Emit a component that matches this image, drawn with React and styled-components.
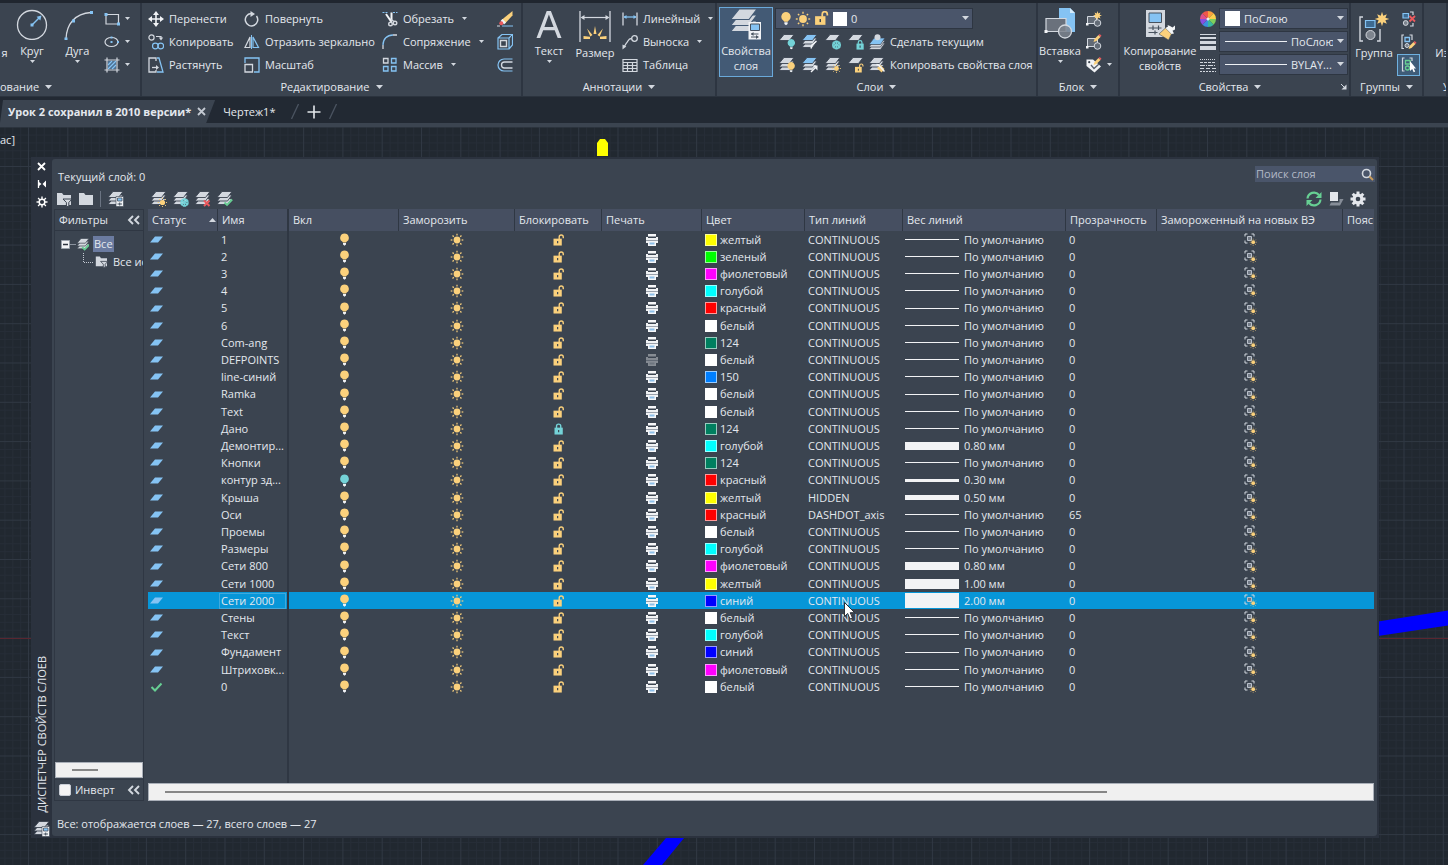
import React, { useState } from 'react';
import styled, { createGlobalStyle } from 'styled-components';

const GlobalStyle = createGlobalStyle`
  * {
    box-sizing: border-box;
  }
  body {
    margin: 0;
    background: #212830;
    color: #e4e8ee;
    font-family: 'Open Sans', 'Noto Sans', sans-serif;
    font-size: 11px;
    line-height: 16px;
  }
  button, input, select {
    font: inherit;
    color: inherit;
  }
  button {
    padding: 0;
    border: none;
    background: none;
    cursor: default;
  }
  svg {
    display: block;
    flex: none;
  }
`;

const GREY = '#d3d8df';
const BLUE = '#85c3f3';
const YELLOW = '#fbd17c';
const TEAL = '#74d3d8';
const GREEN = '#67cf93';
const RED = '#ec5a5e';

const Page = styled.div`
  display: flex;
  flex-direction: column;
  min-height: 100vh;
  overflow: hidden;
`;

/* ---------- ribbon ---------- */

const Ribbon = styled.header`
  display: flex;
  border-top: 3px solid #20262f;
  border-bottom: 1px solid #2b333e;
  background: #3b4450;
  white-space: nowrap;
  overflow: hidden;
`;

const RibbonPanel = styled.section`
  display: flex;
  flex-direction: column;
  flex: ${(p) => (p.$width ? 'none' : 1)};
  width: ${(p) => (p.$width ? `${p.$width}px` : 'auto')};
  min-width: 0;
  height: 93px;
  overflow: hidden;
  border-right: 2px solid #2d3541;
`;

const PanelBody = styled.div`
  display: flex;
  flex: 1;
  padding: 4px 0 0 ${(p) => p.$left || 0}px;
`;

const PanelTitle = styled.button`
  display: flex;
  align-items: center;
  justify-content: ${(p) => p.$align || 'center'};
  gap: 6px;
  height: 19px;
  padding-left: ${(p) => p.$left || 0}px;
`;

const TitleBarRow = styled.div`
  display: flex;
  align-items: center;

  & > :first-child {
    flex: 1;
  }
`;

const Column = styled.div`
  display: flex;
  flex-direction: column;
  width: ${(p) => (p.$width ? `${p.$width}px` : 'auto')};
`;

const Tool = styled.button`
  display: flex;
  align-items: center;
  gap: 5px;
  height: 23px;
  padding-left: ${(p) => p.$left || 0}px;
`;

const CaretSlot = styled.span`
  margin-left: 3px;
`;

const IconRow = styled.div`
  display: flex;
  align-items: center;
  height: 23px;
`;

const SmallTool = styled.button`
  display: flex;
  align-items: center;
  justify-content: center;
  width: 23px;
  height: 22px;
  border: 1px solid ${(p) => (p.$active ? '#6fb1e0' : 'transparent')};
  background: ${(p) => (p.$active ? '#3f5c78' : 'none')};
`;

const BigTool = styled.button`
  display: flex;
  flex-direction: column;
  align-items: center;
  flex: none;
  width: ${(p) => p.$width}px;
  height: 70px;
  border: 1px solid ${(p) => (p.$active ? '#6aa9da' : 'transparent')};
  background: ${(p) => (p.$active ? '#435a75' : 'none')};
  line-height: 15px;

  & > svg:first-child {
    margin-bottom: 3px;
  }
  & > svg:last-child {
    margin-top: 2px;
  }
`;

const Combo = styled.div`
  position: relative;
  display: flex;
  align-items: center;
  gap: 4px;
  width: ${(p) => p.$width}px;
  height: 21px;
  margin: 1px 0;
  padding-left: 5px;
  border: 1px solid #2e3642;
  background: #4a556a;
`;

const ComboSelect = styled.select`
  flex: 1;
  min-width: 0;
  height: 19px;
  padding: 0 14px 0 0;
  border: none;
  background: transparent;
  appearance: none;
  outline: none;
`;

const ComboCaret = styled.span`
  position: absolute;
  right: 3px;
  top: 7px;
  pointer-events: none;
`;

const Swatch = styled.span`
  flex: none;
  width: ${(p) => p.$size || 12}px;
  height: ${(p) => p.$size || 12}px;
  border: 1px solid rgba(255, 255, 255, 0.6);
  background: ${(p) => p.$color};
`;

const LineSample = styled.span`
  flex: none;
  width: 62px;
  height: 1px;
  background: #eef1f5;
`;

/* ---------- file tabs ---------- */

const TabStrip = styled.nav`
  display: flex;
  align-items: flex-end;
  height: 30px;
  border-bottom: 4px solid #3b4450;
  background: #222933;
`;

const FileTab = styled.div`
  display: flex;
  align-items: center;
  gap: 6px;
  height: 23px;
  padding: 0 ${(p) => (p.$active ? 9 : 16)}px 0 8px;
  background: ${(p) => (p.$active ? '#3b4450' : 'none')};
  clip-path: ${(p) => (p.$active ? 'polygon(3px 0, 100% 0, calc(100% - 9px) 100%, 0 100%)' : 'none')};
  font-weight: ${(p) => (p.$active ? 700 : 400)};
`;

const NewTab = styled.div`
  display: flex;
  align-items: center;
  gap: 8px;
  height: 23px;
`;

/* ---------- drawing area ---------- */

const Canvas = styled.main`
  position: relative;
  display: flex;
  flex: 1;
  padding: 30px 69px 27px 31px;
`;

const Drawing = styled.svg`
  position: absolute;
  inset: 0;
  width: 100%;
  height: 100%;
`;

const ViewLabel = styled.span`
  position: absolute;
  left: 0;
  top: 5px;
`;

/* ---------- layer palette ---------- */

const Palette = styled.section`
  position: relative;
  display: flex;
  flex: 1;
  min-width: 0;
  background: #2b323e;
`;

const PaletteSide = styled.div`
  display: flex;
  flex-direction: column;
  align-items: center;
  width: 21px;
`;

const SideButton = styled.button`
  display: flex;
  align-items: center;
  justify-content: center;
  width: 18px;
  height: 18px;
`;

const SideTitle = styled.h1`
  margin: auto 0 7px;
  font-size: 11px;
  font-weight: 400;
  line-height: 16px;
  writing-mode: vertical-rl;
  transform: rotate(180deg);
`;

const PalettePanel = styled.div`
  display: flex;
  flex-direction: column;
  flex: 1;
  min-width: 0;
  margin: 2px 2px 2px 0;
  border-radius: 3px;
  background: #3b4450;
`;

const HeadRow = styled.div`
  display: flex;
  align-items: flex-start;
  justify-content: space-between;
  height: 30px;
  padding: 7px 2px 0 6px;
`;

const CurrentLayer = styled.div`
  padding-top: 3px;
`;

const SearchBox = styled.label`
  display: flex;
  align-items: center;
  width: 120px;
  height: 16px;
  padding-right: 1px;
  background: #4a556a;
`;

const SearchInput = styled.input`
  flex: 1;
  min-width: 0;
  height: 16px;
  padding: 0 1px;
  border: none;
  background: transparent;
  outline: none;

  &::placeholder {
    color: #b3bac6;
    opacity: 1;
  }
`;

const Toolbar = styled.div`
  display: flex;
  align-items: center;
  height: 20px;
  padding: 0 8px 0 1px;
`;

const ToolbarButton = styled.button`
  display: flex;
  align-items: center;
  justify-content: center;
  width: 22px;
  height: 18px;
`;

const Divider = styled.span`
  width: 1px;
  height: 16px;
  margin: 0 4px 0 3px;
  background: #6b7482;
`;

const ToolbarGap = styled.span`
  width: 21px;
  flex: ${(p) => (p.$grow ? 1 : 'none')};
`;

const Workspace = styled.div`
  display: flex;
  flex: 1;
  gap: 4px;
  padding: 0 3px 0 2px;
`;

const Filters = styled.aside`
  display: flex;
  flex-direction: column;
  flex: none;
  width: 90px;
  border: 1px solid #2f3743;
`;

const FilterHead = styled.div`
  display: flex;
  align-items: center;
  justify-content: space-between;
  height: 21px;
  padding: 0 3px 0 4px;
  border-bottom: 1px solid #2f3743;
`;

const FilterFoot = styled(FilterHead)`
  border-top: 1px solid #343c49;
  border-bottom: none;
`;

const Tree = styled.ul`
  flex: 1;
  margin: 0;
  padding: 4px 0 0;
  overflow: hidden;
  list-style: none;
`;

const TreeItem = styled.li`
  display: flex;
  align-items: center;
  gap: 4px;
  height: 18px;
  padding-left: ${(p) => p.$indent}px;
  white-space: nowrap;
  overflow: hidden;
`;

const TreeLabel = styled.span`
  padding: 0 1px;
  background: ${(p) => (p.$selected ? '#6b7ba0' : 'none')};
`;

const ScrollTrack = styled.div`
  display: flex;
  align-items: center;
  height: ${(p) => p.$height}px;
  margin: ${(p) => p.$margin || '0'};
  padding-left: 16px;
  border: 1px solid #a9afb8;
  background: #f0f0f0;
`;

const ScrollThumb = styled.span`
  width: ${(p) => p.$width};
  height: 2px;
  background: #868686;
`;

const Invert = styled.label`
  display: flex;
  align-items: center;
  gap: 4px;
`;

const InvertBox = styled.input`
  width: 12px;
  height: 12px;
  margin: 0;
  border: 1px solid #c9ced6;
  border-radius: 2px;
  background: #f4f4f4;
  appearance: none;
`;

const GridArea = styled.div`
  display: flex;
  flex-direction: column;
  flex: 1;
  min-width: 0;
`;

const TableWrap = styled.div`
  display: flex;
  flex: 1;
`;

const LayerTable = styled.table`
  width: 100%;
  border-spacing: 0;
  table-layout: fixed;
  white-space: nowrap;
`;

const HeadCell = styled.th`
  height: 22px;
  padding: 0 0 0 4px;
  overflow: hidden;
  border-right: ${(p) => (p.$pinned ? 2 : 1)}px solid #2f3743;
  background: #464f61;
  font-weight: 400;
  text-align: left;

  &:last-child {
    border-right: none;
  }
`;

const SortLabel = styled.span`
  display: flex;
  align-items: center;
  justify-content: space-between;
  padding-right: 1px;
`;

const LayerRow = styled.tr`
  height: 17px;
  background: ${(p) => (p.$selected ? '#0796d8' : 'none')};

  &:nth-child(5n) {
    height: 18px;
  }
`;

const Cell = styled.td`
  position: relative;
  padding: 0 0 0 ${(p) => p.$left || 0}px;
  border-right: ${(p) => (p.$pinned ? '2px solid #2f3743' : 'none')};
  line-height: 16px;
`;

const CellContent = styled.div`
  display: flex;
  align-items: center;
  gap: ${(p) => p.$gap || 3}px;
  height: 17px;
`;

const NameBox = styled.div`
  height: 16px;
  margin: 0 1px 0 0;
  padding-left: 2px;
  box-shadow: ${(p) => (p.$selected ? 'inset 0 0 0 1px #3fa9dd' : 'none')};
  line-height: 16px;
`;

const Toggle = styled.button`
  display: flex;
  align-items: center;
  justify-content: center;
  width: 100%;
  height: 16px;
`;

const Weight = styled.span`
  flex: none;
  width: 54px;
  height: ${(p) => p.$thick}px;
  background: #f2f3f5;
`;

const Pointer = styled.svg`
  position: absolute;
  left: 39px;
  top: 10px;
  z-index: 1;
  pointer-events: none;
`;

const Status = styled.footer`
  padding: 15px 5px 4px;
`;

/* ---------- icon parts ---------- */

const Icon = ({ w = 16, h = w, size = w, children, ...rest }) => (
  <svg width={size} height={Math.round((size * h) / w)} viewBox={`0 0 ${w} ${h}`} fill="none" aria-hidden="true" {...rest}>
    {children}
  </svg>
);

const Caret = ({ big, up }) => (
  <Icon w={big ? 7 : 5} h={big ? 4 : 3}>
    <path
      d={up ? 'M0 4L3.500 0 7 4z' : big ? 'M0 0h7L3.500 4z' : 'M0 0h5L2.500 3z'}
      fill={GREY}
    />
  </Icon>
);

const SunShape = ({ x = 6, y = 6, r = 3.4, color = YELLOW }) => (
  <g transform={`translate(${x} ${y}) scale(${r / 3.4})`}>
    <circle r="3.400" fill={color} />
    {[0, 45, 90, 135, 180, 225, 270, 315].map((a) => (
      <path key={a} d="M4.600 0h1.700" transform={`rotate(${a})`} stroke={color} strokeWidth="1.200" />
    ))}
  </g>
);

const BulbShape = ({ x = 0, y = 0, k = 1, color = YELLOW }) => (
  <g transform={`translate(${x} ${y}) scale(${k})`}>
    <path d="M4.500 0a4.400 4.400 0 0 1 2.300 8.100L6 9H3L2.200 8.100A4.400 4.400 0 0 1 4.500 0z" fill={color} />
    <path d="M3 9.600h3v1.500L4.500 12.200 3 11.100z" fill="#f2f4f7" />
  </g>
);

const LockShape = ({ x = 0, y = 0, k = 1, color = YELLOW, closed }) => (
  <g transform={`translate(${x} ${y}) scale(${k})`}>
    <path d="M0 4.500h9V12H0z" fill={color} />
    <path
      d={closed ? 'M2.200 5V3a2.300 2.300 0 0 1 4.600 0v2' : 'M6.200 5V2.800a2.200 2.200 0 0 1 4.400 0V4'}
      stroke={color}
      strokeWidth="1.500"
    />
    <path d="M4.500 7v2.600" stroke="#3b4450" strokeWidth="1.300" />
  </g>
);

const SnowShape = ({ x, y, r = 3.5 }) => (
  <g transform={`translate(${x} ${y}) scale(${r / 3.5})`} stroke={TEAL} strokeWidth="1.300">
    {[30, 90, 150].map((a) => (
      <path key={a} d="M-4 0h8M-3.500 -1.600L-2 0l-1.500 1.600M3.500 -1.600L2 0l1.500 1.600" transform={`rotate(${a})`} />
    ))}
  </g>
);

const StackShape = ({ top = GREY, color = GREY, sheets = 3 }) => (
  <g stroke="#3b4450" strokeWidth="0.900">
    {sheets > 2 && <path d="M5 7.500h10l-4.500 6H0z" fill={color} />}
    {sheets > 1 && <path d="M5 4h10l-4.500 6H0z" fill={color} />}
    <path d="M5 0.500h10l-4.500 6H0z" fill={top} />
  </g>
);

const PencilShape = ({ x = 0, y = 0 }) => (
  <g transform={`translate(${x} ${y})`}>
    <path d="M0 8l1-3L5 1l2 2-4 4z" fill={YELLOW} />
    <path d="M5 1l1.300-1L8 1.700 7 3z" fill={RED} />
  </g>
);

const StarShape = ({ x, y, k = 1 }) => (
  <path
    transform={`translate(${x} ${y}) scale(${k})`}
    d="M0-7L1.200-3.200 4.600-4.600 3.200-1.200 7 0 3.200 1.200 4.600 4.600 1.200 3.200 0 7-1.200 3.200-4.600 4.600-3.200 1.200-7 0-3.200-1.200-4.600-4.600-1.200-3.200z"
    fill={YELLOW}
  />
);

/* ---------- ribbon icons ---------- */

const icons = {
  circle: (
    <Icon w={32}>
      <circle cx="16" cy="17" r="14.500" stroke={GREY} strokeWidth="1.300" />
      <path d="M16 17l7-7" stroke={BLUE} strokeWidth="1.400" />
      <path d="M25.500 7.500l-1.200 5-3.700-3.700z" fill={BLUE} />
      <path d="M14.500 15.500h3v3h-3z" fill={BLUE} />
    </Icon>
  ),
  arc: (
    <Icon w={32}>
      <path d="M4 31C4.500 16 13 5.500 29 4.500" stroke={GREY} strokeWidth="1.300" />
      <path d="M2.500 29.500h3v3h-3zM10 11.500h3v3h-3zM28 3h3v3h-3z" fill={BLUE} />
    </Icon>
  ),
  rect: (
    <Icon>
      <path d="M2 3.500h12.500v9.500H2z" stroke={GREY} strokeWidth="1.200" />
      <path d="M0.500 2h3v3h-3zM13 11.500h3v3h-3z" fill={BLUE} />
    </Icon>
  ),
  ellipse: (
    <Icon>
      <ellipse cx="7.500" cy="8" rx="6.500" ry="4.500" stroke={GREY} strokeWidth="1.200" />
      <path d="M6.500 7h2v2h-2zM6.500 2.500h2v2h-2zM13 7h2v2h-2z" fill={BLUE} />
    </Icon>
  ),
  hatch: (
    <Icon>
      <path d="M3 0.500v15M13 0.500v15M0.500 3h15M0.500 13h15" stroke={GREY} strokeWidth="1.200" />
      <path d="M4 4h8v8H4z" fill="#4d7193" />
      <path d="M4 8l4-4M4 12l8-8M8 12l4-4" stroke={BLUE} strokeWidth="1.200" />
    </Icon>
  ),
  move: (
    <Icon>
      <path d="M8 2v12M2 8h12" stroke="#f2f4f7" strokeWidth="1.600" />
      <path d="M8 0l3 4H5zM8 16l3-4H5zM0 8l4-3v6zM16 8l-4-3v6z" fill="#f2f4f7" />
    </Icon>
  ),
  rotate: (
    <Icon>
      <path d="M7 2.500A6.200 6.200 0 1 0 12.500 5" stroke={GREY} strokeWidth="1.500" />
      <path d="M6.500 0l4.500 3-4.500 3z" fill={GREY} />
    </Icon>
  ),
  copy: (
    <Icon>
      <circle cx="3.500" cy="3.500" r="2.600" stroke={GREY} strokeWidth="1.200" />
      <circle cx="7.300" cy="12" r="2.800" stroke={BLUE} strokeWidth="1.200" />
      <circle cx="12.800" cy="12" r="2.800" stroke={BLUE} strokeWidth="1.200" />
      <path d="M8 2.500h5V4" stroke={GREY} strokeWidth="1.200" />
      <path d="M10.800 3.500h4.400L13 6.500z" fill={GREY} />
    </Icon>
  ),
  mirror: (
    <Icon>
      <path d="M6 3v10.500H1z" stroke={GREY} strokeWidth="1.200" />
      <path d="M9 3v10.500h5.500z" stroke={BLUE} strokeWidth="1.200" />
      <path d="M7.500 1v14" stroke={BLUE} strokeWidth="1" />
    </Icon>
  ),
  stretch: (
    <Icon>
      <path d="M8 4V1H1v14h7v-2" stroke={GREY} strokeWidth="1.300" />
      <path d="M9 1h2l4 14H9" stroke={BLUE} strokeWidth="1.300" />
      <path d="M4 10.500h5" stroke={GREY} strokeWidth="1.300" />
      <path d="M8 8l3 2.500L8 13z" fill={GREY} />
    </Icon>
  ),
  scale: (
    <Icon>
      <path d="M1 6V1h14v14h-5" stroke={BLUE} strokeWidth="1.300" />
      <path d="M1 7.500h7.500V15H1z" stroke={GREY} strokeWidth="1.300" />
    </Icon>
  ),
  trim: (
    <Icon>
      <path d="M0.500 1.500h5M11 1.500h4.500" stroke={BLUE} strokeDasharray="2 1" />
      <path d="M4 3l5.500 8M9.500 1.500V10" stroke="#f2f4f7" strokeWidth="2" />
      <circle cx="8.500" cy="13" r="1.800" stroke={GREY} strokeWidth="1.400" />
      <circle cx="13" cy="12" r="1.800" stroke={GREY} strokeWidth="1.400" />
      <path d="M9 8.500l3 2" stroke={GREY} strokeWidth="1.500" />
    </Icon>
  ),
  fillet: (
    <Icon>
      <path d="M1 15v-4M11 1h4" stroke={GREY} strokeWidth="1.300" />
      <path d="M1 11C1 5 5 1 11 1" stroke={BLUE} strokeWidth="1.300" />
    </Icon>
  ),
  array: (
    <Icon>
      <path d="M1.500 1.500h4.500v4.500H1.500z" stroke={GREY} strokeWidth="1.300" />
      <path d="M9.500 1.500H14v4.500H9.500zM1.500 9.500h4.500V14H1.500zM9.500 9.500H14V14H9.500z" stroke={BLUE} strokeWidth="1.300" />
    </Icon>
  ),
  erase: (
    <Icon>
      <path d="M15.500 0v4.500L8 12.500 4.500 9z" fill={YELLOW} />
      <path d="M5.500 8L9 11.500l-2 2L3.500 10z" fill="#f2f4f7" />
      <circle cx="4.300" cy="12.300" r="2" fill={RED} />
      <path d="M0 15h3" stroke={GREY} />
      <path d="M5 15h11" stroke={BLUE} />
    </Icon>
  ),
  explode: (
    <Icon>
      <path d="M3.500 6.500h6v6h-6z" stroke={GREY} strokeWidth="1.400" />
      <path d="M1 4h11v11H1zM1 4l4-3.500h10.500L12 4M15.500 0.500V11L12 15" stroke={BLUE} strokeWidth="1.200" />
    </Icon>
  ),
  offset: (
    <Icon>
      <path d="M15.500 2H7a6 6 0 0 0 0 12h8.500" stroke={BLUE} strokeWidth="1.200" />
      <path d="M15.500 5H7.500a3 3 0 0 0 0 6h8" stroke={GREY} strokeWidth="1.300" />
    </Icon>
  ),
  text: (
    <Icon w={32}>
      <path d="M3.500 30L13.700 3h4.200L28.500 30h-3.800l-3-7.800H10.200L7.200 30zM11.400 19h9.200L15.900 6.500z" fill={GREY} />
    </Icon>
  ),
  dimension: (
    <Icon w={32}>
      <path d="M1 1v31M31 1v31" stroke={GREY} strokeWidth="1.300" />
      <path d="M3 7.500h26" stroke={GREY} strokeWidth="1.200" />
      <path d="M1.500 7.500l4-2.500v5zM30.500 7.500l-4-2.500v5z" fill={GREY} />
      <path d="M16 16l1.500 8h-3zM8 18.500l5.500 6.500-2.200 1.500zM24 18.500L18.500 25l2.200 1.500zM4.500 26l6.500 0.800V29H4.500zM27.500 26l-6.500 0.800V29h6.500z" fill={YELLOW} />
    </Icon>
  ),
  linear: (
    <Icon>
      <path d="M1 1.500v13M15 1.500v13" stroke={GREY} strokeWidth="1.300" />
      <path d="M2 6h12" stroke={BLUE} strokeWidth="1.300" />
      <path d="M1.500 6l3-2v4zM14.500 6l-3-2v4z" fill={BLUE} />
    </Icon>
  ),
  leader: (
    <Icon>
      <circle cx="12.500" cy="4.500" r="2.800" stroke={GREY} strokeWidth="1.300" />
      <path d="M9.500 4.500C6 4.500 6 8 4.500 9L2 13" stroke={GREY} strokeWidth="1.300" />
      <path d="M0.500 15.500v-5l3.800 2z" fill={GREY} />
    </Icon>
  ),
  table: (
    <Icon>
      <path d="M1 2.500h14v12H1zM1 5.500h14M1 8.500h14M1 11.500h14M5.500 5.500v9M10.500 5.500v9" stroke={GREY} strokeWidth="1.200" />
    </Icon>
  ),
  layerProps: (
    <Icon w={32}>
      <g fill={GREY} stroke="#435a75" strokeWidth="1.200">
        <path d="M9 13h18l-8 10.500H0.500z" />
        <path d="M9 7h18l-8 10.500H0.500z" />
        <path d="M9 1h18l-8 10.500H0.500z" />
      </g>
      <path d="M18.500 14h12.500v17.500H18.500z" fill="#f0f2f5" />
      <path d="M20.500 16h9v6.500h-9z" fill={BLUE} stroke="#47525f" />
      <path d="M21 26h7.500M21 29h7.500" stroke="#47525f" strokeWidth="1.200" />
      <path d="M23.500 24v4L21 26zM26 27v4l2.500-2z" fill="#47525f" />
    </Icon>
  ),
  insert: (
    <Icon w={32}>
      <path d="M15 0h11l5 5v19H15z" fill={BLUE} />
      <path d="M26 0l5 5h-5z" fill="#d6ecfb" />
      <path d="M2 10.500h20v13H2z" fill="#6a717c" stroke={GREY} strokeWidth="1.200" />
      <circle cx="21" cy="23.500" r="6.500" fill="#7d848e" fillOpacity="0.850" stroke={GREY} strokeWidth="1.300" />
      <path d="M0.500 22h3v3h-3z" fill="#f2f4f7" />
    </Icon>
  ),
  blockCreate: (
    <Icon>
      <path d="M1.500 5.500h9v7h-9z" stroke={GREY} fill="#636b76" />
      <circle cx="11.500" cy="12" r="3.300" stroke={GREY} fill="#636b76" />
      <path d="M0 12h2.500v2.500H0z" fill="#f2f4f7" />
      <StarShape x={11.5} y={4.5} k={0.65} />
    </Icon>
  ),
  blockEdit: (
    <Icon>
      <path d="M1.500 4.500h10v8h-10z" stroke={GREY} fill="#636b76" />
      <circle cx="11.500" cy="12" r="3.300" stroke={GREY} fill="#636b76" />
      <path d="M0 12h2.500v2.500H0z" fill="#f2f4f7" />
      <PencilShape x={7.5} y={0} />
    </Icon>
  ),
  blockAttr: (
    <Icon>
      <path d="M0.500 2.500h6.500l8 7-6.500 6L0.500 9z" fill="#f0f2f5" />
      <circle cx="3.200" cy="5.200" r="1.100" fill="#3b4450" />
      <path d="M5 8l3 3.500 5-4.500" stroke="#59616d" strokeWidth="1.300" />
      <PencilShape x={7.5} y={0} />
    </Icon>
  ),
  matchProps: (
    <Icon w={32}>
      <path d="M2 2h19v27H2z" fill={GREY} />
      <path d="M5 5h12.500v9.500H5z" fill={BLUE} stroke="#47525f" />
      <path d="M4.500 20h13M4.500 24.500h9M9 17.500v4.500M14.500 17.500v4.500M11 22.500v4" stroke="#47525f" strokeWidth="1.200" />
      <path d="M15 26l6.500-6 6 6-3 6z" fill={YELLOW} stroke="#47525f" strokeWidth="0.600" />
      <path d="M21.500 20l2.500-1.500-0.500-1.500 2.500 1 2.500 1.500L31 17.500v4l-2.500 1.200 1.500 2.800-2.500 0.500z" fill="#f4f6f8" />
    </Icon>
  ),
  wheel: (
    <Icon>
      {['#f9a03c', '#fbd04c', '#7fcf5d', '#3ab8a0', '#3c8fe0', '#8a4fe0', '#e0508a', '#f0564a'].map((color, i) => (
        <path key={color} d="M8 8V0a8 8 0 0 1 5.657 2.343z" fill={color} transform={`rotate(${i * 45} 8 8)`} />
      ))}
      <circle cx="8" cy="8" r="1.500" fill="#e8ebef" />
    </Icon>
  ),
  lineweight: (
    <Icon>
      <path d="M0 0.500h16" stroke={GREY} />
      <path d="M0 4h16" stroke={GREY} strokeWidth="2" />
      <path d="M0 8.500h16" stroke={GREY} strokeWidth="3" />
      <path d="M0 14h16" stroke={GREY} strokeWidth="4" />
    </Icon>
  ),
  linetype: (
    <Icon>
      <path d="M0 2.500h16" stroke={GREY} strokeDasharray="1 1" />
      <path d="M0 5.500h16" stroke={GREY} strokeDasharray="3 1" />
      <path d="M0 8.500h16" stroke={GREY} strokeDasharray="5 1 1 1" />
      <path d="M0 11.500h16" stroke={GREY} strokeDasharray="4 2" />
      <path d="M0 14.500h16" stroke={GREY} strokeDasharray="2 1" />
    </Icon>
  ),
  group: (
    <Icon w={32}>
      <path d="M5 7H2v24h3M19 31h3V19" stroke={GREY} strokeWidth="1.400" />
      <path d="M7.500 10.500h9.500v7H7.500z" fill="#3d6a91" stroke={BLUE} strokeWidth="1.200" />
      <circle cx="12.500" cy="25" r="4.500" fill="#7d848e" stroke={GREY} />
      <StarShape x={24} y={9} k={1.05} />
    </Icon>
  ),
  ungroup: (
    <Icon>
      <path d="M2 2.500h5.500V7H2z" fill="#3d6a91" stroke={BLUE} strokeWidth="1.200" />
      <circle cx="4.700" cy="12" r="2.400" fill="#7d848e" stroke={GREY} />
      <path d="M9 1h3v3M12 12v3H9" stroke={GREY} strokeWidth="1.200" />
      <path d="M8.500 5l5.500 5.500M14 5l-5.500 5.500" stroke={RED} strokeWidth="1.800" />
    </Icon>
  ),
  groupEdit: (
    <Icon>
      <path d="M3 1H1v13.500h2M8.500 1h2.500v5" stroke={GREY} strokeWidth="1.200" />
      <path d="M4 3.500h4.500v4H4z" stroke={BLUE} strokeWidth="1.300" />
      <circle cx="6" cy="11.500" r="2" fill="#7d848e" stroke={GREY} />
      <PencilShape x={7.5} y={7} />
    </Icon>
  ),
  groupSelect: (
    <Icon>
      <path d="M3.500 1H1.500v13h2M8.500 1H11v3" stroke={GREY} strokeWidth="1.200" />
      <path d="M4.500 3.500H9v3.500H4.500z" stroke={GREEN} strokeWidth="1.300" />
      <circle cx="6.500" cy="11" r="2" stroke={GREEN} strokeWidth="1.300" />
      <path d="M9 4v10l2.200-2 1.500 3.300 1.500-.700-1.500-3.200H15z" fill="#fff" />
    </Icon>
  ),
};

const CheckShape = ({ x = 0, y = 0, k = 1 }) => (
  <path transform={`translate(${x} ${y}) scale(${k})`} d="M0 3.500l3 3L9 0" stroke={GREEN} strokeWidth="2.200" />
);

const LayerOff = () => (
  <Icon>
    <StackShape sheets={1} />
    <BulbShape x={8.5} y={5} k={0.85} color={TEAL} />
  </Icon>
);
const LayerIsolate = () => (
  <Icon>
    <StackShape top={BLUE} />
    <path d="M9 14.500l1-3.500 4.500-4" stroke="#f2f4f7" strokeWidth="1.400" />
  </Icon>
);
const LayerFreeze = () => (
  <Icon>
    <StackShape sheets={1} />
    <SnowShape x={11.5} y={11} r={4} />
  </Icon>
);
const LayerLock = () => (
  <Icon>
    <StackShape sheets={1} />
    <LockShape x={8.5} y={6} k={0.8} color={TEAL} closed />
  </Icon>
);
const LayerOn = () => (
  <Icon>
    <StackShape />
    <BulbShape x={8.3} y={5} k={0.85} />
  </Icon>
);
const LayerUnisolate = () => (
  <Icon>
    <StackShape top={BLUE} />
    <path d="M9 15l5-5" stroke="#f2f4f7" strokeWidth="1.500" />
    <path d="M15.500 8.500v5l-5-5z" fill="#f2f4f7" />
  </Icon>
);
const LayerThaw = () => (
  <Icon>
    <StackShape />
    <SunShape x={11.5} y={11.5} r={2.4} />
  </Icon>
);
const LayerUnlock = () => (
  <Icon>
    <StackShape sheets={1} />
    <LockShape x={7} y={6.5} k={0.75} />
  </Icon>
);
const LayerCurrent = () => (
  <Icon>
    <g stroke="#3b4450" strokeWidth="0.700">
      <path d="M5 9h11l-4.500 6.500H0z" fill={GREY} />
      <path d="M5 6.500h11L11.500 13H0z" fill={GREY} />
      <path d="M5 4h11l-4.500 6.500H0z" fill={BLUE} />
    </g>
    <circle cx="8.500" cy="3.200" r="3" fill={GREY} />
  </Icon>
);
const LayerMatch = () => (
  <Icon>
    <StackShape />
    <path d="M8 11l3.500-3 4 4-3 3.500z" fill={YELLOW} />
    <path d="M7.500 7.500l2 0.500 6 6.500" stroke="#f2f4f7" strokeWidth="1.500" />
  </Icon>
);

const LayerTool = ({ badge }) => (
  <Icon>
    <StackShape />
    {badge === 'new' && <SunShape x={11.5} y={11.5} r={2.6} />}
    {badge === 'frozen' && <SnowShape x={11.5} y={11.5} r={3.8} />}
    {badge === 'delete' && <path d="M9 9.500l5.500 5.500M14.500 9.500L9 15" stroke={RED} strokeWidth="2" />}
    {badge === 'current' && <CheckShape x={7.5} y={8.5} k={0.85} />}
  </Icon>
);

const FolderIcon = ({ filter, size }) => (
  <Icon size={size}>
    <path d="M1 2h5l1.500 2H15v10H1z" fill={GREY} />
    {filter && <path d="M7 8h9l-3.200 3.500v4h-2.400v-4z" fill={GREY} stroke="#3b4450" />}
  </Icon>
);

const StatesIcon = () => (
  <Icon>
    <StackShape />
    <path d="M8 5.500h7.500v10H8z" fill="#f2f4f7" stroke="#3b4450" strokeWidth="0.600" />
    <path d="M9.500 7h4.500v3H9.500z" fill={BLUE} stroke="#47525f" strokeWidth="0.800" />
    <path d="M9.500 13h4.500M11.700 11.500v3" stroke="#47525f" />
  </Icon>
);

const RefreshIcon = () => (
  <Icon>
    <path d="M1.500 7.500A6.500 6.500 0 0 1 13 4M14.500 8.500A6.500 6.500 0 0 1 3 12" stroke={GREEN} strokeWidth="2.200" />
    <path d="M15.500 1v6h-6zM0.500 15V9h6z" fill={GREEN} />
  </Icon>
);

const OverrideIcon = () => (
  <Icon>
    <path d="M2 1h8v9H2z" fill="#e4e7ec" />
    <path d="M3 11.500h8.500V8H15.500L12 14.500H1.500z" fill="#868d98" />
  </Icon>
);

const GearIcon = () => (
  <Icon>
    {[0, 45, 90, 135].map((a) => (
      <path key={a} d="M8 0.500v15" stroke="#e4e7ec" strokeWidth="3" transform={`rotate(${a} 8 8)`} />
    ))}
    <circle cx="8" cy="8" r="5.500" fill="#e4e7ec" />
    <circle cx="8" cy="8" r="2.300" fill="#3b4450" />
  </Icon>
);

const ChevronsIcon = () => (
  <Icon w={13} h={10}>
    <path d="M6 1L2 5l4 4M12 1L8 5l4 4" stroke={GREY} strokeWidth="1.900" />
  </Icon>
);

const CloseIcon = ({ size = 9, color = '#c3c9d2' }) => (
  <Icon w={9} size={size}>
    <path d="M1 1l7 7M8 1L1 8" stroke={color} strokeWidth="1.800" />
  </Icon>
);

const SlashIcon = () => (
  <Icon w={8} h={15}>
    <path d="M7.500 0L0.500 15" stroke="#4b5461" strokeWidth="1.300" />
  </Icon>
);

const StatusIcon = ({ current }) =>
  current ? (
    <Icon w={13} h={10}>
      <path d="M1.500 5l3.500 3.500L11.500 1.500" stroke={GREEN} strokeWidth="2" />
    </Icon>
  ) : (
    <Icon w={13} h={7}>
      <path d="M5 0.500h8L8 6.500H0z" fill={BLUE} />
    </Icon>
  );

const PrinterIcon = ({ off }) => (
  <Icon w={12} opacity={off ? 0.4 : 1}>
    <path d="M2 0h8v2.500H2z" fill="#f6f7f9" />
    <path d="M0 3h2v1h8V3h2v6H0z" fill="#f1f3f5" />
    <path d="M0 6h12v1H0z" fill="#9aa1ab" />
    <path d="M2 8.500h8V12H2z" fill="#f6f7f9" />
    <path d="M3.500 8.500h5v2h-5z" fill={off ? '#b8bec6' : '#8dbfe8'} />
  </Icon>
);

const ViewportIcon = () => (
  <Icon w={13}>
    <path d="M1 3.500V1h2.500M7.500 1H10v2.500M1 7.500V10h2.500" stroke={GREY} />
    <path d="M3.500 3.500h4v4h-4z" fill="#737b87" stroke="#b9c0ca" />
    <SunShape x={9.2} y={9.2} r={1.9} />
  </Icon>
);

/* ---------- data ---------- */

const WHITE = '#ffffff';
const initialLayers = [
  { name: '1', color: '#ffff00', colorName: 'желтый' },
  { name: '2', color: '#00ff00', colorName: 'зеленый' },
  { name: '3', color: '#ff00ff', colorName: 'фиолетовый' },
  { name: '4', color: '#00ffff', colorName: 'голубой' },
  { name: '5', color: '#ff0000', colorName: 'красный' },
  { name: '6', color: WHITE, colorName: 'белый' },
  { name: 'Com-ang', color: '#007f5f', colorName: '124' },
  { name: 'DEFPOINTS', color: WHITE, colorName: 'белый', noPlot: true },
  { name: 'line-синий', color: '#007fff', colorName: '150' },
  { name: 'Ramka', color: WHITE, colorName: 'белый' },
  { name: 'Text', color: WHITE, colorName: 'белый' },
  { name: 'Дано', color: '#007f5f', colorName: '124', locked: true },
  { name: 'Демонтир...', color: '#00ffff', colorName: 'голубой', weight: '0.80 мм', thick: 8 },
  { name: 'Кнопки', color: '#007f5f', colorName: '124' },
  { name: 'контур зд...', color: '#ff0000', colorName: 'красный', weight: '0.30 мм', thick: 3, off: true },
  { name: 'Крыша', color: '#ffff00', colorName: 'желтый', linetype: 'HIDDEN', weight: '0.50 мм', thick: 5 },
  { name: 'Оси', color: '#ff0000', colorName: 'красный', linetype: 'DASHDOT_axis', transparency: '65' },
  { name: 'Проемы', color: WHITE, colorName: 'белый' },
  { name: 'Размеры', color: '#00ffff', colorName: 'голубой' },
  { name: 'Сети 800', color: '#ff00ff', colorName: 'фиолетовый', weight: '0.80 мм', thick: 8 },
  { name: 'Сети 1000', color: '#ffff00', colorName: 'желтый', weight: '1.00 мм', thick: 10 },
  { name: 'Сети 2000', color: '#0000ff', colorName: 'синий', weight: '2.00 мм', thick: 15 },
  { name: 'Стены', color: WHITE, colorName: 'белый' },
  { name: 'Текст', color: '#00ffff', colorName: 'голубой' },
  { name: 'Фундамент', color: '#0000ff', colorName: 'синий' },
  { name: 'Штриховк...', color: '#ff00ff', colorName: 'фиолетовый' },
  { name: '0', color: WHITE, colorName: 'белый', current: true },
];

const columns = [
  { title: 'Статус', width: 70 },
  { title: 'Имя', width: 71 },
  { title: 'Вкл', width: 110 },
  { title: 'Заморозить', width: 116 },
  { title: 'Блокировать', width: 87 },
  { title: 'Печать', width: 100 },
  { title: 'Цвет', width: 103 },
  { title: 'Тип линий', width: 98 },
  { title: 'Вес линий', width: 163 },
  { title: 'Прозрачность', width: 91 },
  { title: 'Замороженный на новых ВЭ', width: 186 },
  { title: 'Пояс', width: 31 },
];

/* ---------- ribbon sections ---------- */

const TextTool = ({ icon, label, caret }) => (
  <Tool>
    {icons[icon]}
    {label}
    {caret && (
      <CaretSlot>
        <Caret />
      </CaretSlot>
    )}
  </Tool>
);

const Title = ({ children, ...rest }) => (
  <PanelTitle {...rest}>
    {children}
    <Caret big />
  </PanelTitle>
);

const DrawPanel = () => (
  <RibbonPanel $width={142}>
    <PanelBody>
      <BigTool $width={9} aria-label="Полилиния">
        <Icon w={6} h={32} />
        я
      </BigTool>
      <BigTool $width={46}>
        {icons.circle}
        Круг
        <Caret />
      </BigTool>
      <BigTool $width={45}>
        {icons.arc}
        Дуга
        <Caret />
      </BigTool>
      <Column>
        {['rect', 'ellipse', 'hatch'].map((name) => (
          <IconRow key={name}>
            <SmallTool aria-label={name}>{icons[name]}</SmallTool>
            <Tool $left={2} aria-label={`${name} +`}>
              <Caret />
            </Tool>
          </IconRow>
        ))}
      </Column>
    </PanelBody>
    <Title $align="flex-start">ование</Title>
  </RibbonPanel>
);

const ModifyPanel = () => (
  <RibbonPanel $width={381}>
    <PanelBody $left={6}>
      <Column $width={96}>
        <TextTool icon="move" label="Перенести" />
        <TextTool icon="copy" label="Копировать" />
        <TextTool icon="stretch" label="Растянуть" />
      </Column>
      <Column $width={138}>
        <TextTool icon="rotate" label="Повернуть" />
        <TextTool icon="mirror" label="Отразить зеркально" />
        <TextTool icon="scale" label="Масштаб" />
      </Column>
      <Column $width={111}>
        <TextTool icon="trim" label="Обрезать" caret />
        <TextTool icon="fillet" label="Сопряжение" caret />
        <TextTool icon="array" label="Массив" caret />
      </Column>
      <Column>
        {['erase', 'explode', 'offset'].map((name) => (
          <IconRow key={name}>
            <SmallTool aria-label={name}>{icons[name]}</SmallTool>
          </IconRow>
        ))}
      </Column>
    </PanelBody>
    <Title>Редактирование</Title>
  </RibbonPanel>
);

const AnnotationPanel = () => (
  <RibbonPanel $width={194}>
    <PanelBody $left={3}>
      <BigTool $width={46}>
        {icons.text}
        Текст
        <Caret />
      </BigTool>
      <BigTool $width={46}>
        {icons.dimension}
        Размер
      </BigTool>
      <AnnotationTools>
        <TextTool icon="linear" label="Линейный" caret />
        <TextTool icon="leader" label="Выноска" caret />
        <TextTool icon="table" label="Таблица" />
      </AnnotationTools>
    </PanelBody>
    <Title>Аннотации</Title>
  </RibbonPanel>
);

const AnnotationTools = styled(Column)`
  padding-left: 4px;
`;

const LayersPanel = () => (
  <RibbonPanel $width={321}>
    <PanelBody $left={2}>
      <BigTool $width={54} $active>
        {icons.layerProps}
        <span>
          Свойства
          <br />
          слоя
        </span>
      </BigTool>
      <LayerTools>
        <Combo $width={198}>
          <Icon w={9} h={13} size={10}>
            <BulbShape />
          </Icon>
          <Icon w={14} size={16}>
            <SunShape x={7} y={7} />
          </Icon>
          <Icon w={12} h={13} size={14}>
            <LockShape />
          </Icon>
          <Swatch $size={14} $color="#fff" />
          <ComboSelect aria-label="Слой" defaultValue="0">
            <option>0</option>
          </ComboSelect>
          <ComboCaret>
            <Caret big />
          </ComboCaret>
        </Combo>
        <IconRow>
          <SmallTool aria-label="Отключить"><LayerOff /></SmallTool>
          <SmallTool aria-label="Изолировать"><LayerIsolate /></SmallTool>
          <SmallTool aria-label="Заморозить"><LayerFreeze /></SmallTool>
          <SmallTool aria-label="Блокировать"><LayerLock /></SmallTool>
          <Tool $left={2}>
            <LayerCurrent />
            Сделать текущим
          </Tool>
        </IconRow>
        <IconRow>
          <SmallTool aria-label="Включить все"><LayerOn /></SmallTool>
          <SmallTool aria-label="Отменить изоляцию"><LayerUnisolate /></SmallTool>
          <SmallTool aria-label="Разморозить"><LayerThaw /></SmallTool>
          <SmallTool aria-label="Разблокировать"><LayerUnlock /></SmallTool>
          <Tool $left={2}>
            <LayerMatch />
            Копировать свойства слоя
          </Tool>
        </IconRow>
      </LayerTools>
    </PanelBody>
    <Title>Слои</Title>
  </RibbonPanel>
);

const LayerTools = styled(Column)`
  padding-left: 2px;
`;

const BlockPanel = () => (
  <RibbonPanel $width={82}>
    <PanelBody>
      <BigTool $width={44}>
        {icons.insert}
        Вставка
        <Caret />
      </BigTool>
      <Column>
        {['blockCreate', 'blockEdit', 'blockAttr'].map((name) => (
          <IconRow key={name}>
            <SmallTool aria-label={name}>{icons[name]}</SmallTool>
            {name === 'blockAttr' && (
              <Tool $left={2} aria-label="Атрибуты">
                <Caret />
              </Tool>
            )}
          </IconRow>
        ))}
      </Column>
    </PanelBody>
    <Title>Блок</Title>
  </RibbonPanel>
);

const PropertiesPanel = () => (
  <RibbonPanel $width={231}>
    <PanelBody>
      <BigTool $width={80}>
        {icons.matchProps}
        <span>
          Копирование
          <br />
          свойств
        </span>
      </BigTool>
      <Column>
        {['wheel', 'lineweight', 'linetype'].map((name) => (
          <IconRow key={name}>{icons[name]}</IconRow>
        ))}
      </Column>
      <ComboStack>
        <Combo $width={129}>
          <Swatch $size={15} $color="#fff" />
          <ComboSelect aria-label="Цвет объекта" defaultValue="ПоСлою">
            <option>ПоСлою</option>
          </ComboSelect>
          <ComboCaret>
            <Caret big />
          </ComboCaret>
        </Combo>
        <Combo $width={129}>
          <LineSample />
          <ComboSelect aria-label="Вес линий" defaultValue="ПоСлою">
            <option>ПоСлою</option>
          </ComboSelect>
          <ComboCaret>
            <Caret big />
          </ComboCaret>
        </Combo>
        <Combo $width={129}>
          <LineSample />
          <ComboSelect aria-label="Тип линий" defaultValue="BYLAY...">
            <option>BYLAY...</option>
          </ComboSelect>
          <ComboCaret>
            <Caret big />
          </ComboCaret>
        </Combo>
      </ComboStack>
    </PanelBody>
    <TitleBarRow>
      <Title>Свойства</Title>
      <button aria-label="Палитра свойств">
        <Icon w={9} h={8}>
          <path d="M1 1l4 4" stroke={GREY} />
          <path d="M6.500 1.500v5h-5z" fill={GREY} />
        </Icon>
      </button>
    </TitleBarRow>
  </RibbonPanel>
);

const ComboStack = styled(Column)`
  padding-left: 3px;
`;

const GroupsPanel = () => (
  <RibbonPanel $width={73}>
    <PanelBody>
      <BigTool $width={46}>
        {icons.group}
        Группа
      </BigTool>
      <Column>
        {['ungroup', 'groupEdit', 'groupSelect'].map((name) => (
          <IconRow key={name}>
            <SmallTool aria-label={name} $active={name === 'groupSelect'}>
              {icons[name]}
            </SmallTool>
          </IconRow>
        ))}
      </Column>
    </PanelBody>
    <Title>Группы</Title>
  </RibbonPanel>
);

const UtilitiesPanel = () => (
  <RibbonPanel>
    <PanelBody $left={10}>
      <BigTool $width={16}>
        <Icon w={6} h={32} />
        Из
      </BigTool>
    </PanelBody>
    <PanelTitle $align="flex-start" $left={19}>
      У
    </PanelTitle>
  </RibbonPanel>
);

/* ---------- palette ---------- */

const LayerLine = ({ layer, selected, onSelect, onToggle }) => (
  <LayerRow $selected={selected} onClick={onSelect}>
    <Cell $left={2}>
      <StatusIcon current={layer.current} />
    </Cell>
    <Cell $left={1} $pinned>
      <NameBox $selected={selected}>{layer.name}</NameBox>
    </Cell>
    <Cell>
      <Toggle aria-label="Вкл" onClick={() => onToggle('off')}>
        <Icon w={9} h={13}>
          <BulbShape y={0.5} color={layer.off ? TEAL : YELLOW} />
        </Icon>
      </Toggle>
    </Cell>
    <Cell>
      <Toggle aria-label="Заморозить">
        <Icon w={14}>
          <SunShape x={7} y={7} />
        </Icon>
      </Toggle>
    </Cell>
    <Cell>
      <Toggle aria-label="Блокировать" onClick={() => onToggle('locked')}>
        <Icon w={12} h={12}>
          <LockShape x={layer.locked ? 1.5 : 0.5} y={0.5} k={0.92} closed={layer.locked} color={layer.locked ? TEAL : YELLOW} />
        </Icon>
      </Toggle>
    </Cell>
    <Cell>
      <Toggle aria-label="Печать" onClick={() => onToggle('noPlot')}>
        <PrinterIcon off={layer.noPlot} />
      </Toggle>
    </Cell>
    <Cell $left={3}>
      <CellContent>
        <Swatch $color={layer.color} />
        {layer.colorName}
      </CellContent>
    </Cell>
    <Cell $left={3}>
      {layer.linetype || 'CONTINUOUS'}
      {selected && (
        <Pointer width="12" height="18" viewBox="0 0 12 18" aria-hidden="true">
          <path d="M0.500 0.500v14l3.200-3 2.300 5.500 2.500-1-2.300-5.300h4.500z" fill="#fff" stroke="#2a303a" />
        </Pointer>
      )}
    </Cell>
    <Cell $left={2}>
      <CellContent $gap={5}>
        <Weight $thick={layer.thick || 1} />
        {layer.weight || 'По умолчанию'}
      </CellContent>
    </Cell>
    <Cell $left={3}>{layer.transparency || '0'}</Cell>
    <Cell>
      <Toggle aria-label="Заморозить на новых ВЭ">
        <ViewportIcon />
      </Toggle>
    </Cell>
    <Cell />
  </LayerRow>
);

const LayerPalette = () => {
  const [layers, setLayers] = useState(initialLayers);
  const [selected, setSelected] = useState('Сети 2000');

  const toggle = (name, key) => {
    setLayers(layers.map((l) => (l.name === name ? { ...l, [key]: !l[key] } : l)));
  };

  return (
    <Palette>
      <PaletteSide>
        <SideButton aria-label="Закрыть">
          <CloseIcon color="#fff" />
        </SideButton>
        <SideButton aria-label="Автоматически убирать с экрана">
          <Icon w={10}>
            <path d="M1.500 1v8" stroke="#fff" strokeWidth="1.300" />
            <path d="M2 3l2.500 2L2 7zM9 1.500v7L5.500 5z" fill="#fff" />
          </Icon>
        </SideButton>
        <SideButton aria-label="Свойства">
          <Icon w={12}>
            <circle cx="6" cy="6" r="2.800" stroke="#fff" strokeWidth="1.500" />
            {[0, 45, 90, 135, 180, 225, 270, 315].map((a) => (
              <path key={a} d="M6 0.500v2.500" stroke="#fff" strokeWidth="1.400" transform={`rotate(${a} 6 6)`} />
            ))}
          </Icon>
        </SideButton>
        <SideTitle>ДИСПЕТЧЕР СВОЙСТВ СЛОЕВ</SideTitle>
        <SideButton aria-label="Палитра">
          <StatesIcon />
        </SideButton>
      </PaletteSide>
      <PalettePanel>
        <HeadRow>
          <CurrentLayer>Текущий слой: 0</CurrentLayer>
          <SearchBox>
            <SearchInput type="text" placeholder="Поиск слоя" aria-label="Поиск слоя" />
            <Icon w={13}>
              <circle cx="5.500" cy="5.500" r="4" stroke={GREY} strokeWidth="1.600" />
              <path d="M8.500 8.500L12 12" stroke="#c79a5b" strokeWidth="2" />
            </Icon>
          </SearchBox>
        </HeadRow>
        <Toolbar>
          <ToolbarButton aria-label="Новый фильтр по свойствам">
            <FolderIcon filter />
          </ToolbarButton>
          <ToolbarButton aria-label="Новый групповой фильтр">
            <FolderIcon />
          </ToolbarButton>
          <Divider />
          <ToolbarButton aria-label="Диспетчер конфигураций слоев">
            <StatesIcon />
          </ToolbarButton>
          <ToolbarGap />
          {['new', 'frozen', 'delete', 'current'].map((badge) => (
            <ToolbarButton key={badge} aria-label={badge}>
              <LayerTool badge={badge} />
            </ToolbarButton>
          ))}
          <ToolbarGap $grow />
          <ToolbarButton aria-label="Обновить">
            <RefreshIcon />
          </ToolbarButton>
          <ToolbarButton aria-label="Переопределения">
            <OverrideIcon />
          </ToolbarButton>
          <ToolbarButton aria-label="Настройки">
            <GearIcon />
          </ToolbarButton>
        </Toolbar>
        <Workspace>
          <Filters>
            <FilterHead>
              Фильтры
              <button aria-label="Свернуть">
                <ChevronsIcon />
              </button>
            </FilterHead>
            <Tree>
              <TreeItem $indent={6}>
                <Icon w={28} h={18}>
                  <path d="M0.500 5.500h8v8h-8z" fill="#f2f4f7" stroke="#9aa2ad" />
                  <path d="M2 9.500h5" stroke="#2b323e" strokeWidth="1.500" />
                  <path d="M9 9.500h6" stroke="#8a929d" />
                  <g transform="translate(16 3) scale(0.800)">
                    <StackShape />
                    <CheckShape x={6.5} y={8} />
                  </g>
                </Icon>
                <TreeLabel $selected>Все</TreeLabel>
              </TreeItem>
              <TreeItem $indent={28}>
                <Icon w={25} h={18}>
                  <path d="M0.500 0v9.500H11" stroke="#c3c9d2" strokeDasharray="1 1" />
                  <g transform="translate(12 2) scale(0.800)">
                    <path d="M1 2h5l1.500 2H15v10H1z" fill={GREY} />
                    <path d="M7 8h9l-3.200 3.500v4h-2.400v-4z" fill={GREY} stroke="#3b4450" />
                  </g>
                </Icon>
                <TreeLabel>Все исп</TreeLabel>
              </TreeItem>
            </Tree>
            <ScrollTrack $height={16} $margin="0 0 1px">
              <ScrollThumb $width="26px" />
            </ScrollTrack>
            <FilterFoot>
              <Invert>
                <InvertBox type="checkbox" />
                Инверт
              </Invert>
              <button aria-label="Свернуть фильтры">
                <ChevronsIcon />
              </button>
            </FilterFoot>
          </Filters>
          <GridArea>
            <TableWrap>
              <LayerTable>
                <colgroup>
                  {columns.map((c) => (
                    <col key={c.title} width={c.width} />
                  ))}
                </colgroup>
                <thead>
                  <tr>
                    {columns.map((c, i) => (
                      <HeadCell key={c.title} scope="col" $pinned={i === 1}>
                        {i === 0 ? (
                          <SortLabel>
                            {c.title}
                            <Caret big up />
                          </SortLabel>
                        ) : (
                          c.title
                        )}
                      </HeadCell>
                    ))}
                  </tr>
                </thead>
                <tbody>
                  {layers.map((layer) => (
                    <LayerLine
                      key={layer.name}
                      layer={layer}
                      selected={layer.name === selected}
                      onSelect={() => setSelected(layer.name)}
                      onToggle={(key) => toggle(layer.name, key)}
                    />
                  ))}
                  <tr aria-hidden="true">
                    <td />
                    <Cell $pinned />
                    <td colSpan={10} />
                  </tr>
                </tbody>
              </LayerTable>
            </TableWrap>
            <ScrollTrack $height={18}>
              <ScrollThumb $width="78%" />
            </ScrollTrack>
          </GridArea>
        </Workspace>
        <Status>Все: отображается слоев — 27, всего слоев — 27</Status>
      </PalettePanel>
    </Palette>
  );
};

const App = () => (
  <Page>
    <GlobalStyle />
    <Ribbon>
      <DrawPanel />
      <ModifyPanel />
      <AnnotationPanel />
      <LayersPanel />
      <BlockPanel />
      <PropertiesPanel />
      <GroupsPanel />
      <UtilitiesPanel />
    </Ribbon>
    <TabStrip>
      <FileTab $active>
        Урок 2 сохранил в 2010 версии*
        <button aria-label="Закрыть вкладку">
          <CloseIcon />
        </button>
      </FileTab>
      <FileTab>Чертеж1*</FileTab>
      <NewTab>
        <SlashIcon />
        <button aria-label="Новая вкладка">
          <Icon w={14}>
            <path d="M7 0.500v13M0.500 7h13" stroke="#e4e7ec" strokeWidth="1.600" />
          </Icon>
        </button>
        <SlashIcon />
      </NewTab>
    </TabStrip>
    <Canvas>
      <Drawing aria-hidden="true">
        <defs>
          <pattern id="grid" x="28" y="39" width="39.300" height="39.300" patternUnits="userSpaceOnUse">
            {[1, 2, 3, 4].map((n) => (
              <path key={n} d={`M${n * 7.86 + 0.5} 0v39.300M0 ${n * 7.86 + 0.5}h39.300`} stroke="#262d37" />
            ))}
            <path d="M0.500 0v39.300M0 0.500h39.300" stroke="#303843" />
          </pattern>
        </defs>
        <rect width="100%" height="100%" fill="url(#grid)" />
        <path d="M0 511.500h1448" stroke="#5a2630" />
        <path d="M597 29V16l3-4h5l3 4v13z" fill="#ffff00" />
        <path d="M1378 494.500l70-11v15l-70 10.500z" fill="#0000ff" />
        <path d="M666 711h18l-22 27h-19z" fill="#0000ff" />
      </Drawing>
      <ViewLabel>ас]</ViewLabel>
      <LayerPalette />
    </Canvas>
  </Page>
);

export default App;
